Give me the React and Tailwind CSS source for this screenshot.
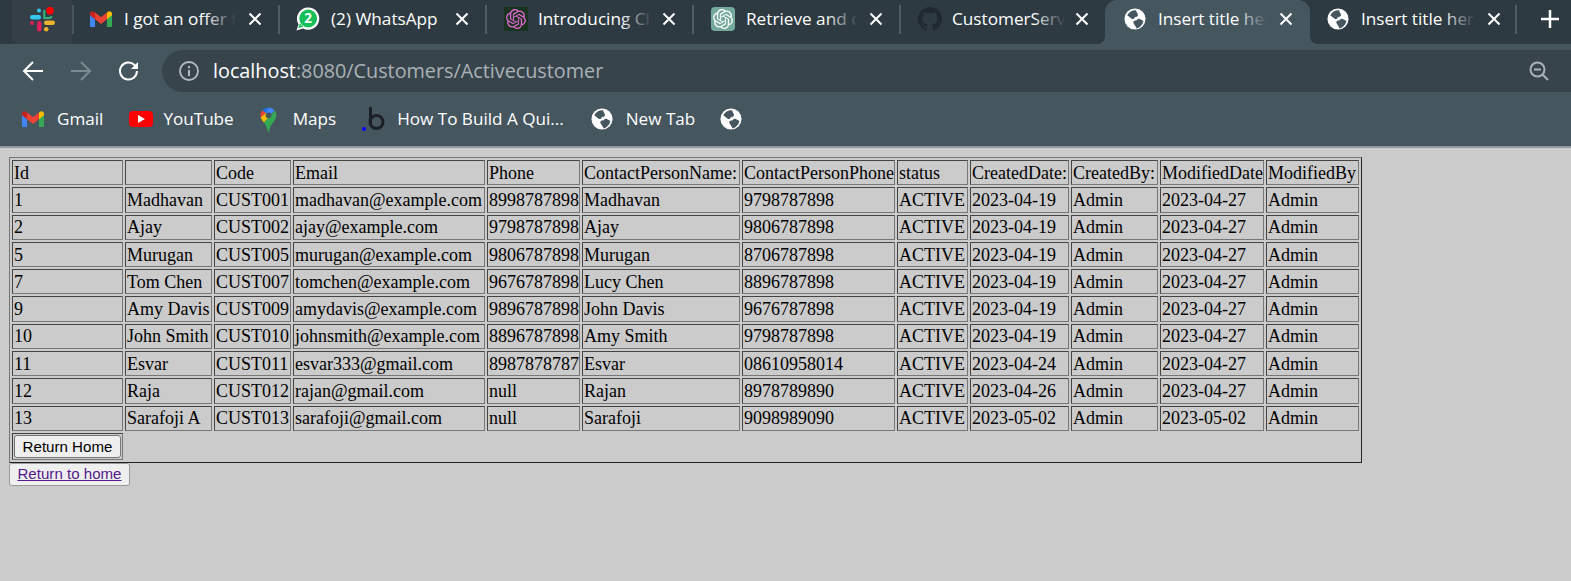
import React from "react";
import { SiOpenai } from "react-icons/si";

const Close = () => (
  <svg width="14" height="14" viewBox="0 0 14 14" className="shrink-0"><path d="M1.500 1.500L12.500 12.500M12.500 1.500L1.500 12.500" stroke="#fff" strokeWidth="2" /></svg>
);
const Globe = ({ s = 22 }) => (
  <svg width={s} height={s} viewBox="0 0 24 24" className="shrink-0">
    <circle cx="12" cy="12" r="11.500" fill="#fff" />
    <path d="M12 2.500C8 2.700 4.600 5.300 3.200 8.800L8.300 12c1.200.8 2.800.2 3-1.200.2-1.100 1.800-1 2.800-1.800 1-.9.8-2.300 0-3.200-.7-.9-1.600-2.200-2.100-3.800zM21.400 13.200l-4.200-1.700c-1.100-.4-2.400.1-2.900 1.100-.5 1.100-1.900.7-3 1.300-1 .6-1 2-.2 3l2.400 3.200c.5.7 1 1.400 1.400 1.900 3.500-1.200 6-4.600 6.500-8.800z" fill="#46565f" transform="rotate(6 12 12)" />
  </svg>
);
const GmailIcon = ({ s = 22 }) => (
  <svg width={s} height={s * 0.76} viewBox="0 0 24 18" className="shrink-0">
    <path d="M0 3v13.200C0 17.200.8 18 1.800 18H5.500V8.500L0 3z" fill="#4285f4" />
    <path d="M24 3v13.200c0 1-.8 1.800-1.800 1.800H18.500V8.500L24 3z" fill="#34a853" />
    <path d="M18.500 1.500V9L24 4.500V2.700C24 .6 21.600-.6 20 .6l-1.500.9z" fill="#fbbc04" />
    <path d="M5.500 9V1.500L12 6.500l6.500-5V9L12 14 5.500 9z" fill="#ea4335" />
    <path d="M0 2.700V4.500L5.500 9V1.500L4 .6C2.400-.6 0 .6 0 2.700z" fill="#c5221f" />
  </svg>
);
const Slack = () => (
  <svg width="25" height="25" viewBox="0 0 25 25" className="shrink-0">
    <rect x="0" y="8" width="11" height="4.500" rx="2.250" fill="#36c5f0" />
    <rect x="7" y="1.500" width="4" height="4" rx="2" fill="#36c5f0" />
    <rect x="0" y="14" width="4" height="4" rx="2" fill="#e01e5a" />
    <rect x="7" y="14" width="4.500" height="10.500" rx="2.250" fill="#e01e5a" />
    <path d="M14.300 3v8h5a2 2 0 0 0 2-2" fill="none" stroke="#2eb67d" strokeWidth="2" />
    <circle cx="20" cy="3.700" r="3.800" fill="#ff0000" />
    <rect x="14" y="13.500" width="11" height="4.500" rx="2.250" fill="#ecb22e" />
    <rect x="14" y="20" width="4.500" height="4.500" rx="2.250" fill="#ecb22e" />
  </svg>
);
const WhatsApp = () => (
  <svg width="24" height="24" viewBox="0 0 25 25" className="shrink-0">
    <path d="M12.700 0.500a11.600 11.600 0 0 0-10 17.500L0.500 24.500l6.800-2.100A11.600 11.600 0 1 0 12.700.5z" fill="#fff" />
    <circle cx="12.700" cy="12" r="9.300" fill="#16bf57" />
    <path d="M4 17l-1.500 5 5-1.500z" fill="#16bf57" />
    <text x="12.700" y="17" textAnchor="middle" fontSize="14" fontWeight="700" fill="#fff" fontFamily="'Open Sans', sans-serif">2</text>
  </svg>
);
const GitHub = () => (
  <svg width="24" height="24" viewBox="0 0 24 24" className="shrink-0">
    <path d="M12 0C5.400 0 0 5.400 0 12c0 5.300 3.400 9.800 8.200 11.400.6.100.8-.3.8-.6v-2c-3.300.7-4-1.600-4-1.600-.6-1.400-1.400-1.800-1.400-1.800-1-.7.100-.7.100-.7 1.200.1 1.800 1.200 1.800 1.200 1.100 1.800 2.800 1.300 3.500 1 .1-.8.400-1.300.8-1.600-2.700-.3-5.500-1.300-5.500-5.900 0-1.300.5-2.400 1.200-3.200-.1-.3-.5-1.500.1-3.200 0 0 1-.3 3.300 1.200a11.500 11.500 0 0 1 6 0c2.300-1.500 3.300-1.200 3.300-1.200.7 1.700.2 2.900.1 3.200.8.800 1.200 1.900 1.200 3.200 0 4.600-2.800 5.600-5.500 5.900.4.400.8 1.100.8 2.200v3.300c0 .3.200.7.800.6A12 12 0 0 0 24 12c0-6.600-5.400-12-12-12z" fill="#1f292f" />
  </svg>
);
const Maps = () => (
  <svg width="17" height="25" viewBox="0 0 17 25" className="shrink-0">
    <path d="M8.500.5a8 8 0 0 1 6.200 3L8.500 9.500 5 6z" fill="#4285f4" />
    <path d="M8.500.5A8 8 0 0 0 2.300 3.500L6 6z" fill="#1a73e8" />
    <path d="M2.300 3.500A8 8 0 0 0 .7 10.500L6 6z" fill="#ea4335" />
    <path d="M.7 10.500c.8 2 2 3.500 3.200 5L11 8 6 6z" fill="#fbbc04" />
    <path d="M15 3.800c2 2.800 2 6-.2 9.300-2.300 3.300-5 6-5.600 11.400H7.800c-.4-3-1.700-5.200-3.900-9z" fill="#34a853" />
    <circle cx="8.500" cy="8.300" r="2.800" fill="#46565f" />
  </svg>
);

const Fade = ({ children, fade = true, from = "from-[#2e3a42]" }) => (
  <span className="relative min-w-0 flex-1 overflow-hidden whitespace-nowrap text-[17.200px] text-white">
    {children}
    {fade && <span className={`absolute right-0 top-0 h-full w-8 bg-gradient-to-l ${from} to-transparent`} />}
  </span>
);
const Sep = ({ c = "bg-[#4f5d66]" }) => <div className={`mb-[6px] h-[29px] w-[2px] shrink-0 self-center ${c}`} />;

const cols = ["w-[111px]", "w-[87px]", "w-[77px]", "w-[192px]", "w-[93px]", "w-[158px]", "w-[153px]", "w-[71px]", "w-[99px]", "w-[87px]", "w-[104px]", "w-[93px]"];
const head = ["Id", "", "Code", "Email", "Phone", "ContactPersonName:", "ContactPersonPhone", "status", "CreatedDate:", "CreatedBy:", "ModifiedDate", "ModifiedBy"];
const rows = [
  ["1", "Madhavan", "CUST001", "madhavan@example.com", "8998787898", "Madhavan", "9798787898", "2023-04-19", "2023-04-27"],
  ["2", "Ajay", "CUST002", "ajay@example.com", "9798787898", "Ajay", "9806787898", "2023-04-19", "2023-04-27"],
  ["5", "Murugan", "CUST005", "murugan@example.com", "9806787898", "Murugan", "8706787898", "2023-04-19", "2023-04-27"],
  ["7", "Tom Chen", "CUST007", "tomchen@example.com", "9676787898", "Lucy Chen", "8896787898", "2023-04-19", "2023-04-27"],
  ["9", "Amy Davis", "CUST009", "amydavis@example.com", "9896787898", "John Davis", "9676787898", "2023-04-19", "2023-04-27"],
  ["10", "John Smith", "CUST010", "johnsmith@example.com", "8896787898", "Amy Smith", "9798787898", "2023-04-19", "2023-04-27"],
  ["11", "Esvar", "CUST011", "esvar333@gmail.com", "8987878787", "Esvar", "08610958014", "2023-04-24", "2023-04-27"],
  ["12", "Raja", "CUST012", "rajan@gmail.com", "null", "Rajan", "8978789890", "2023-04-26", "2023-04-27"],
  ["13", "Sarafoji A", "CUST013", "sarafoji@gmail.com", "null", "Sarafoji", "9098989090", "2023-05-02", "2023-05-02"],
];

const cellBorder = "border border-t-[#444] border-l-[#444] border-r-[#777] border-b-[#777]";
const tdc = `h-[25.300px] whitespace-nowrap ${cellBorder} px-[1px] py-0 text-left align-middle font-normal leading-none`;

export default function App() {
  return (
    <div className="flex h-[581px] w-[1571px] flex-col overflow-hidden bg-[#cbcbcb] font-['Open_Sans','Noto_Sans',sans-serif]">
      {/* tab strip */}
      <div className="flex h-[44px] shrink-0 items-stretch bg-[#2e3a42]">
        <div className="ml-[12px] flex w-[60px] shrink-0 items-center justify-center rounded-bl-lg bg-[#343f47] pb-[6px]">
          <Slack />
        </div>
        <Sep c="bg-[#46545c]" />
        <div className="flex w-[204px] shrink-0 items-center gap-[12px] pb-[6px] pl-[16px] pr-[16px]">
          <GmailIcon />
          <Fade>I got an offer f</Fade>
          <Close />
        </div>
        <Sep />
        <div className="flex w-[205px] shrink-0 items-center gap-[11px] pb-[6px] pl-[16px] pr-[16px]">
          <WhatsApp />
          <Fade fade={false}>(2) WhatsApp</Fade>
          <Close />
        </div>
        <Sep />
        <div className="flex w-[205px] shrink-0 items-center gap-[10px] pb-[6px] pl-[17px] pr-[16px]">
          <span className="flex h-6 w-6 shrink-0 items-center justify-center bg-[#18331f]"><SiOpenai size={20} color="#e667d5" /></span>
          <Fade>Introducing Cl</Fade>
          <Close />
        </div>
        <Sep />
        <div className="flex w-[205px] shrink-0 items-center gap-[11px] pb-[6px] pl-[17px] pr-[16px]">
          <span className="flex h-6 w-6 shrink-0 items-center justify-center rounded bg-[#74aa9c]"><SiOpenai size={20} color="#fff" /></span>
          <Fade>Retrieve and d</Fade>
          <Close />
        </div>
        <Sep />
        <div className="flex w-[208px] shrink-0 items-center gap-[10px] pb-[6px] pl-[17px] pr-[20px]">
          <GitHub />
          <Fade>CustomerServ</Fade>
          <Close />
        </div>
        <div className="relative -ml-[4px] flex w-[205px] shrink-0 items-center gap-[12px] rounded-t-xl bg-[#46565f] pb-[6px] pl-[19px] pr-[17px] before:absolute before:bottom-0 before:-left-[8px] before:h-2 before:w-2 before:bg-[radial-gradient(circle_at_0_0,#2e3a42_8px,#46565f_8px)] after:absolute after:bottom-0 after:-right-[8px] after:h-2 after:w-2 after:bg-[radial-gradient(circle_at_100%_0,#2e3a42_8px,#46565f_8px)]">
          <Globe />
          <Fade from="from-[#46565f]">Insert title her</Fade>
          <Close />
        </div>
        <div className="flex w-[205px] shrink-0 items-center gap-[12px] pb-[6px] pl-[17px] pr-[14px]">
          <Globe />
          <Fade>Insert title her</Fade>
          <Close />
        </div>
        <Sep />
        <div className="flex shrink-0 items-center pb-[6px]">
          <svg width="18" height="18" viewBox="0 0 18 18" className="ml-6"><path d="M9 0V18M0 9H18" stroke="#fff" strokeWidth="2.500" /></svg>
        </div>
      </div>

      {/* toolbar */}
      <div className="flex h-[48px] shrink-0 items-end bg-[#46565f]">
        <div className="flex h-[42px] w-[162px] shrink-0 items-center pl-[22px]">
          <svg width="22" height="22" viewBox="0 0 22 22" fill="none" stroke="#fff" strokeWidth="2"><path d="M21 11H2M11 2l-9 9 9 9" /></svg>
          <svg width="22" height="22" viewBox="0 0 22 22" fill="none" stroke="#7d8b93" strokeWidth="2" className="ml-[26px]"><path d="M1 11h19M11 2l9 9-9 9" /></svg>
          <svg width="22" height="22" viewBox="0 0 22 22" fill="none" stroke="#fff" strokeWidth="2" className="ml-[26px]"><path d="M19 11a8.500 8.500 0 1 1-2.500-6L19.500 8" /><path d="M20 2v7h-7" fill="#fff" stroke="none" /></svg>
        </div>
        <div className="flex h-[42px] flex-1 items-center rounded-l-[21px] bg-[#38444c] pl-[17px] pr-[22px]">
          <svg width="20" height="20" viewBox="0 0 20 20" fill="none" className="shrink-0"><circle cx="10" cy="10" r="9" stroke="#b3bbc0" strokeWidth="1.800" /><path d="M10 9v6M10 5v2.200" stroke="#b3bbc0" strokeWidth="2" /></svg>
          <span className="ml-[14px] text-[19.800px] text-white">localhost<span className="text-[#aab2b7]">:8080/Customers/Activecustomer</span></span>
          <svg width="20" height="20" viewBox="0 0 20 20" fill="none" stroke="#aab2b7" strokeWidth="2" className="ml-auto"><circle cx="8.500" cy="8.500" r="7" /><path d="M5 8.500h7M13.500 13.500l5.500 5.500" /></svg>
        </div>
      </div>

      {/* bookmarks */}
      <div className="flex h-[54px] shrink-0 items-center bg-[#46565f] pl-[22px] text-[17.100px] text-white">
        <GmailIcon s={22} />
        <span className="ml-[13px]">Gmail</span>
        <span className="ml-[26px] flex h-[16px] w-[24px] items-center justify-center rounded bg-[#ff0000]">
          <span className="ml-[1px] border-y-[4px] border-l-[7px] border-y-transparent border-l-white" />
        </span>
        <span className="ml-[10px]">YouTube</span>
        <span className="ml-[26px]"><Maps /></span>
        <span className="ml-[16px]">Maps</span>
        <span className="relative ml-[26px] h-[24px] w-[23px] shrink-0">
          <svg width="23" height="24" viewBox="0 0 23 24" fill="none" stroke="#1c2227" strokeWidth="3"><path d="M8.500 0v17" /><circle cx="14.500" cy="15" r="6.500" /></svg>
          <span className="absolute bottom-0 left-0 h-[4px] w-[4px] rounded-full bg-[#0000ff]" />
        </span>
        <span className="ml-[12px]">How To Build A Qui...</span>
        <span className="ml-[27px]"><Globe /></span>
        <span className="ml-[13px]">New Tab</span>
        <span className="ml-[25px]"><Globe /></span>
      </div>
      <div className="h-[2px] shrink-0 bg-[#8e989d]" />

      {/* page */}
      <div className="pl-[9px] pt-[9px] font-['Liberation_Serif',serif] text-[18px] text-black">
        <table className="w-[1353px] table-fixed border-separate border-spacing-[2px] border border-t-[#777] border-l-[#777] border-r-[#222] border-b-[#222]">
          <colgroup>{cols.map((c, i) => <col key={i} className={c} />)}</colgroup>
          <tbody>
            <tr>{head.map((h, i) => <td key={i} className={tdc}>{h}</td>)}</tr>
            {rows.map((r) => (
              <tr key={r[0]}>
                {r.slice(0, 7).map((c, i) => <td key={i} className={tdc}>{c}</td>)}
                <td className={tdc}>ACTIVE</td>
                <td className={tdc}>{r[7]}</td>
                <td className={tdc}>Admin</td>
                <td className={tdc}>{r[8]}</td>
                <td className={tdc}>Admin</td>
              </tr>
            ))}
            <tr>
              <td className={`${cellBorder} p-px leading-none`}>
                <button className="h-[23px] w-full rounded-[3px] border border-[#767676] bg-[#efefef] font-['Liberation_Sans',sans-serif] text-[15.100px] text-black">Return Home</button>
              </td>
            </tr>
          </tbody>
        </table>
        <button className="flex h-[23px] w-[121px] items-center justify-center rounded-[3px] border border-[#9a9a9a] bg-[#efefef] font-['Liberation_Sans',sans-serif] text-[15.100px] text-[#551a8b] underline">Return to home</button>
      </div>
    </div>
  );
}
